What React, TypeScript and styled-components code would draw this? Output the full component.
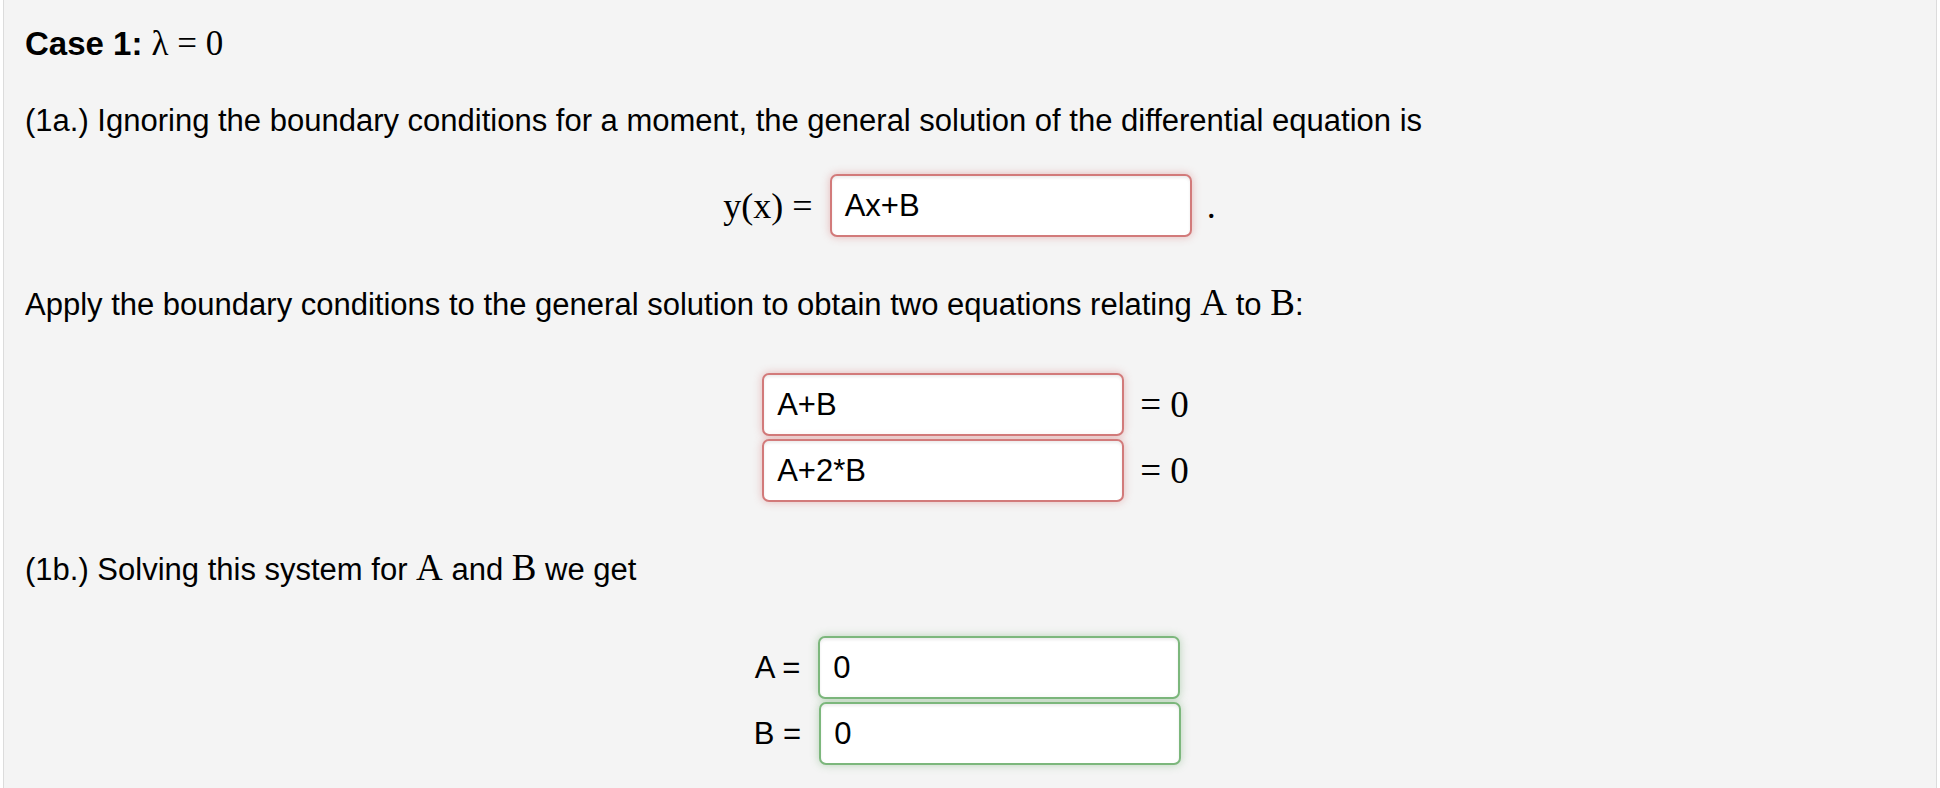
import React from "react";
import styled, { createGlobalStyle, css } from "styled-components";

const Global = createGlobalStyle`
  html, body { margin: 0; padding: 0; background: #ffffff; }
  body { font-family: "Liberation Sans", Arial, Helvetica, sans-serif; color: #000; }
`;

const Panel = styled.div`
  margin-left: 3px;
  width: 1934px;
  min-height: 788px;
  box-sizing: border-box;
  background: #f4f4f4;
  border-left: 1px solid #dcdcdc;
  border-right: 1px solid #dcdcdc;
  padding: 28px 22px 0 21px;
  display: flex;
  flex-direction: column;
`;

const Line = styled.div<{ $top: number }>`
  margin-top: ${(p) => p.$top}px;
  font-size: 31px;
  line-height: 32px;
  white-space: nowrap;
`;

const Bold = styled.span`
  font-weight: bold;
  font-size: 33px;
`;

const M = styled.span<{ $size?: number }>`
  font-family: "Liberation Serif", "Times New Roman", serif;
  font-size: ${(p) => p.$size ?? 37}px;
`;

const CenterRow = styled.div<{ $top: number }>`
  margin-top: ${(p) => p.$top}px;
  display: flex;
  justify-content: center;
  align-items: center;
`;

const Stack = styled.div<{ $top: number; $shift?: number }>`
  margin-top: ${(p) => p.$top}px;
  display: flex;
  flex-direction: column;
  align-items: center;
  gap: 3px;
  transform: translateX(${(p) => p.$shift ?? 0}px);
`;

const Row = styled.div`
  display: flex;
  align-items: center;
`;

const Field = styled.div<{ $state: "bad" | "good" }>`
  box-sizing: border-box;
  width: 362px;
  height: 63px;
  background: #fff;
  border-radius: 7px;
  padding: 0 13px;
  display: flex;
  align-items: center;
  font-size: 31px;
  ${(p) =>
    p.$state === "bad"
      ? css`
          border: 2px solid #d27a7a;
          box-shadow: inset 0 2px 3px rgba(0, 0, 0, 0.08), 0 0 9px rgba(210, 110, 110, 0.45);
        `
      : css`
          border: 2px solid #7cb77c;
          box-shadow: inset 0 2px 3px rgba(0, 0, 0, 0.08), 0 0 9px rgba(110, 170, 110, 0.45);
        `}
`;

const Before = styled.span<{ $gap: number }>`
  margin-right: ${(p) => p.$gap}px;
`;

const After = styled.span<{ $gap: number }>`
  margin-left: ${(p) => p.$gap}px;
`;

const Label = styled.span`
  font-size: 31px;
  margin-right: 18px;
  text-align: right;
`;

export default function App() {
  return (
    <>
      <Global />
      <Panel>
        <Line $top={0}>
          <Bold>Case 1: </Bold>
          <M $size={35}>λ = 0</M>
        </Line>
        <Line $top={44}>
          (1a.) Ignoring the boundary conditions for a moment, the general solution of the differential equation is
        </Line>
        <CenterRow $top={37}>
          <Before $gap={17}>
            <M $size={36}>y(x) =</M>
          </Before>
          <Field $state="bad">Ax+B</Field>
          <After $gap={15}>
            <M $size={36}>.</M>
          </After>
        </CenterRow>
        <Line $top={50}>
          Apply the boundary conditions to the general solution to obtain two equations relating <M>A</M> to <M>B</M>:
        </Line>
        <Stack $top={52} $shift={6}>
          <Row>
            <Field $state="bad">A+B</Field>
            <After $gap={16}>
              <M>= 0</M>
            </After>
          </Row>
          <Row>
            <Field $state="bad">A+2*B</Field>
            <After $gap={16}>
              <M>= 0</M>
            </After>
          </Row>
        </Stack>
        <Line $top={50}>
          (1b.) Solving this system for <M>A</M> and <M>B</M> we get
        </Line>
        <Stack $top={50} $shift={-2}>
          <Row>
            <Label>A =</Label>
            <Field $state="good">0</Field>
          </Row>
          <Row>
            <Label>B =</Label>
            <Field $state="good">0</Field>
          </Row>
        </Stack>
      </Panel>
    </>
  );
}
